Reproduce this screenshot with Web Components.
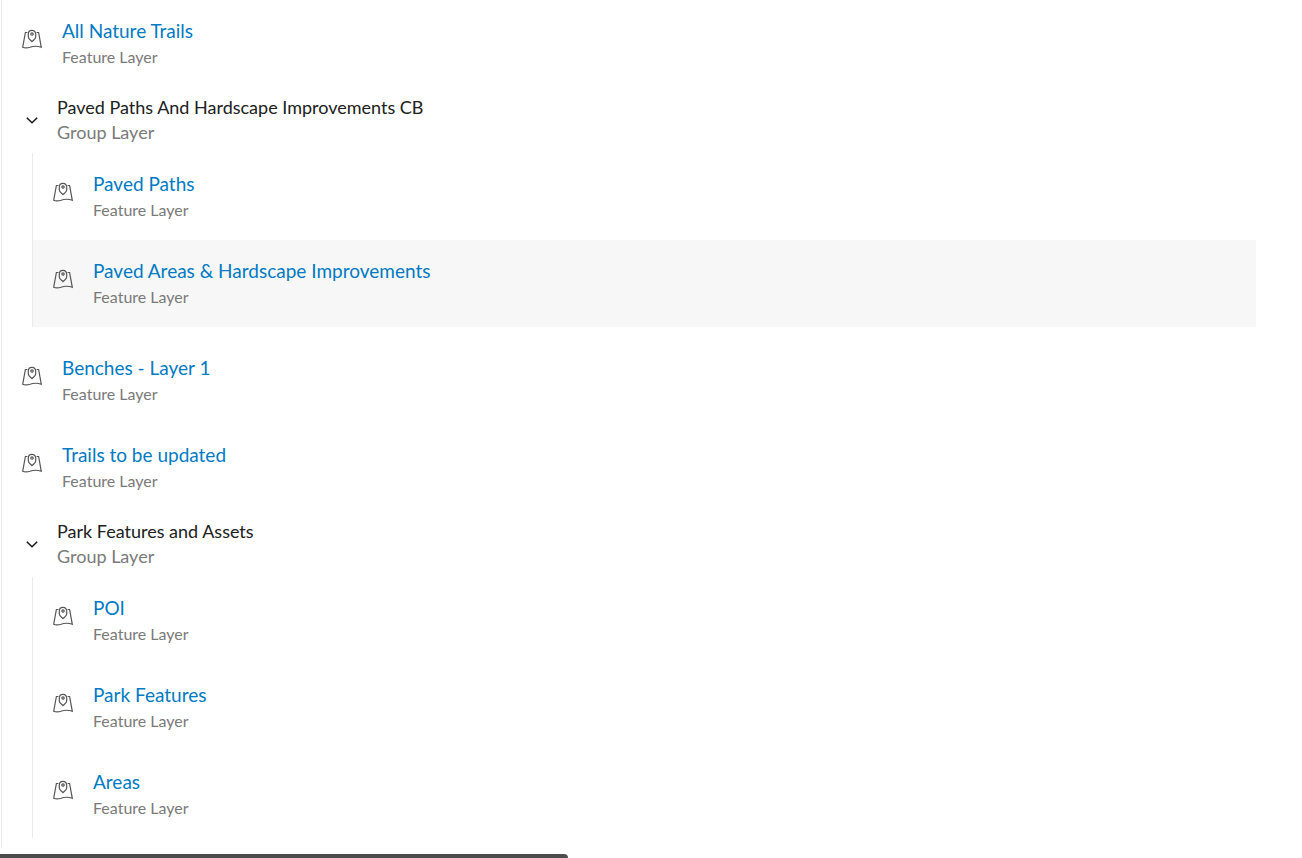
<!DOCTYPE html>
<html lang="en">
<head>
<meta charset="utf-8">
<title>Layers</title>
<style>
body { margin: 0; background: #fff; color: #202020; font-family: Lato, "Noto Sans", sans-serif; }
</style>
</head>
<body>
<layer-tree>
  <feature-layer label="All Nature Trails"></feature-layer>
  <layer-group label="Paved Paths And Hardscape Improvements CB">
    <feature-layer label="Paved Paths"></feature-layer>
    <feature-layer label="Paved Areas &amp; Hardscape Improvements" active></feature-layer>
  </layer-group>
  <feature-layer label="Benches - Layer 1"></feature-layer>
  <feature-layer label="Trails to be updated"></feature-layer>
  <layer-group label="Park Features and Assets">
    <feature-layer label="POI"></feature-layer>
    <feature-layer label="Park Features"></feature-layer>
    <feature-layer label="Areas"></feature-layer>
  </layer-group>
</layer-tree>
<status-strip></status-strip>
<script>
class BaseElement extends HTMLElement {
  connectedCallback() {
    if (this.shadowRoot) return;
    this.attachShadow({ mode: "open" }).innerHTML = this.markup();
    const label = this.shadowRoot.querySelector(".label");
    if (label) label.textContent = this.getAttribute("label");
    this.ready();
  }
  ready() {}
}

customElements.define("layer-tree", class extends BaseElement {
  markup() {
    return `<style>
      :host { display: block; margin: 0 46px 0 1px; padding-bottom: 10px; border-left: 1px solid #eaeaea; }
    </style><slot></slot>`;
  }
});

customElements.define("feature-layer", class extends BaseElement {
  markup() {
    return `<style>
      :host { display: flex; align-items: flex-start; gap: 20px; padding: 18px 20px 17px; }
      :host([active]) { background: #f7f7f7; }
      svg { flex: none; margin-top: 11px; }
      a { display: block; color: #007ac2; font-size: 19px; line-height: 26px; text-decoration: none; }
      a:hover { text-decoration: underline; }
      .type { color: #7a7a7a; font-size: 16px; line-height: 26px; }
    </style>
    <svg width="20" height="20" viewBox="0 0 20 20" fill="none" stroke="#555" stroke-width="1.2" aria-hidden="true">
      <path d="M5.4 3.5H3.4L.7 18.2C3 19.2 5.4 19 8 18.2C11.8 16.9 15 16.8 19.3 18.3L16.6 3.5H14.6"/>
      <path d="M10 1.4C7.6 1.4 6.3 3 6.3 5.2V8C6.3 10 8.6 11 10 12.6C11.4 11 13.7 10 13.7 8V5.2C13.7 3 12.4 1.4 10 1.4Z"/>
      <circle cx="10" cy="5" r="1.2"/>
    </svg>
    <div><a class="label" href="#"></a><div class="type">Feature Layer</div></div>`;
  }
});

customElements.define("layer-group", class extends BaseElement {
  markup() {
    return `<style>
      :host { display: block; margin-bottom: 10px; }
      :host(:last-child) { margin-bottom: 0; }
      button { display: flex; align-items: center; gap: 17px; width: 100%; padding: 8px 22px; border: 0; background: none; color: inherit; font-family: inherit; text-align: left; cursor: pointer; }
      svg { flex: none; }
      button[aria-expanded="false"] svg { transform: rotate(-90deg); }
      .text, .text span { display: block; font-size: 18px; line-height: 25px; }
      .text .type { color: #7a7a7a; }
      .children { margin-left: 30px; border-left: 1px solid #eaeaea; }
    </style>
    <button type="button" aria-expanded="true">
      <svg width="16" height="16" viewBox="0 0 16 16" fill="none" stroke="#151515" stroke-width="1.5" aria-hidden="true"><path d="M2.8 5.8L8 10.8L13.2 5.8"/></svg>
      <span class="text"><span class="label"></span><span class="type">Group Layer</span></span>
    </button>
    <div class="children"><slot></slot></div>`;
  }
  ready() {
    const button = this.shadowRoot.querySelector("button");
    const children = this.shadowRoot.querySelector(".children");
    button.addEventListener("click", () => {
      children.hidden = !children.hidden;
      button.setAttribute("aria-expanded", String(!children.hidden));
    });
  }
});

customElements.define("status-strip", class extends BaseElement {
  markup() {
    return `<style>
      :host { position: fixed; left: 0; bottom: 0; width: 568px; max-width: 100%; height: 4px; background: #4d4d4d; border-top-right-radius: 4px; }
    </style>`;
  }
});
</script>
</body>
</html>
